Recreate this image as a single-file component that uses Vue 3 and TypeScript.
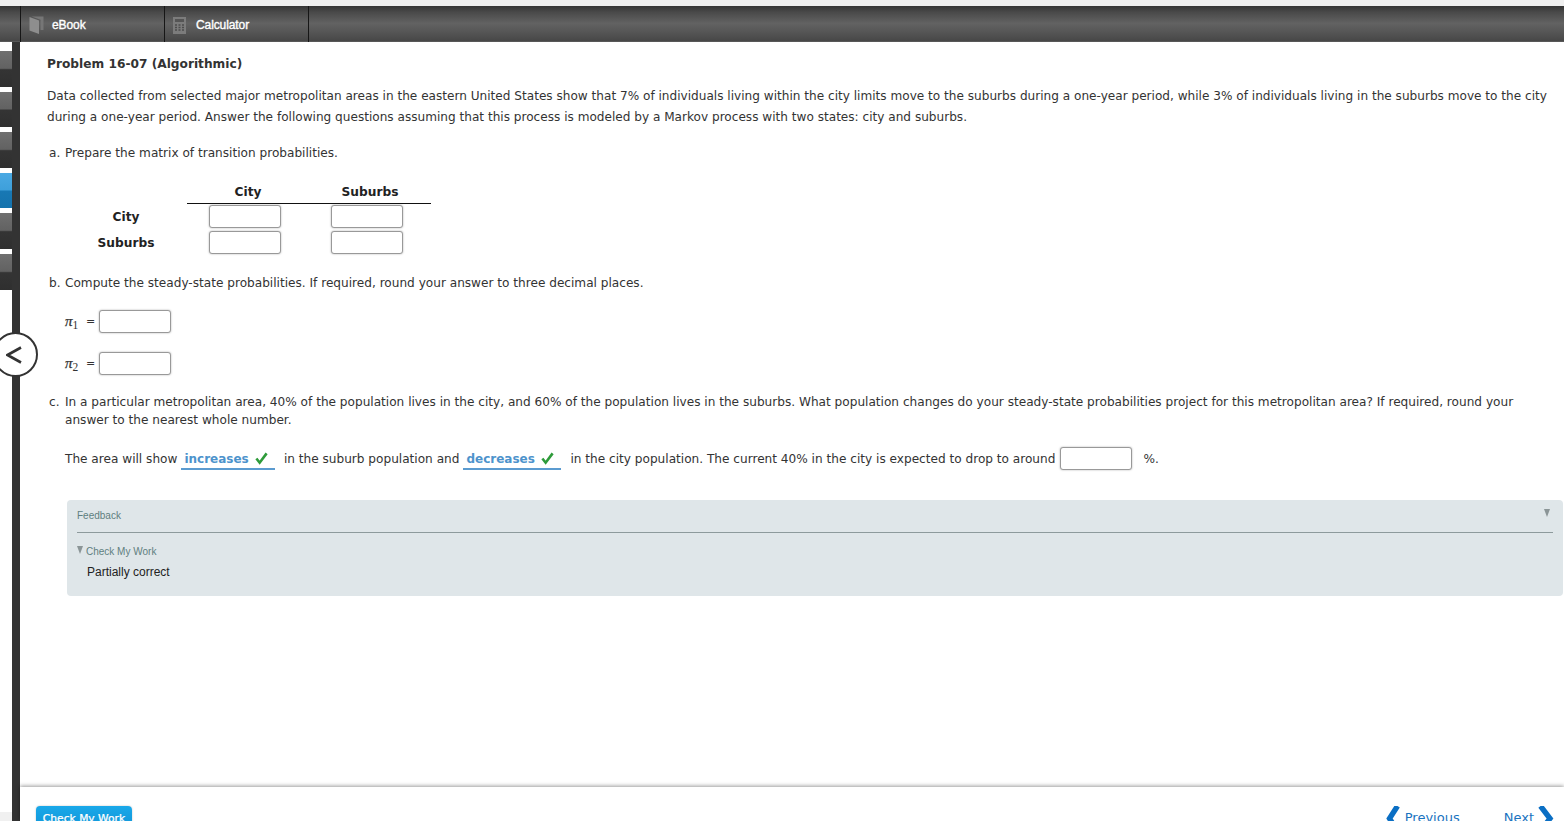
<script setup lang="ts">
const railTabs = [false, false, false, true, false, false]
const matrixRows = ['City', 'Suburbs']
const piRows = ['1', '2']
</script>

<template>
  <div class="app">
    <div class="top-strip"></div>
    <header class="toolbar">
      <div class="tool">
        <svg class="tool-icon" width="15" height="18" viewBox="0 0 15 18">
          <path d="M0.5 1 L10 4.5 V18 L0.5 14.5 Z" fill="#8e8e8e" />
          <path d="M2.5 0.5 H14.5 V14 H11.5 V3.8 Z" fill="#767676" />
        </svg>
        <span>eBook</span>
      </div>
      <div class="tool">
        <svg class="tool-icon" width="13" height="17" viewBox="0 0 13 17">
          <rect x="0" y="0" width="13" height="17" fill="#7c7c7c" />
          <rect x="2" y="2" width="9" height="3" fill="#555" />
          <path d="M2 8h2M5.5 8h2M9 8h2M2 10.5h2M5.5 10.5h2M9 10.5h2M2 13h2M5.5 13h2M9 13h2" stroke="#4c4c4c" stroke-width="1.5" />
        </svg>
        <span>Calculator</span>
      </div>
    </header>

    <div class="body">
      <aside class="rail">
        <div class="rail-tabs">
          <div v-for="(active, i) in railTabs" :key="i" class="rail-tab" :class="{ active }"></div>
          <div class="rail-foot"></div>
        </div>
        <div class="rail-line"></div>
      </aside>

      <main class="main">
        <section class="content">
          <h1 class="title">Problem 16-07 (Algorithmic)</h1>
          <p class="intro">Data collected from selected major metropolitan areas in the eastern United States show that 7% of individuals living within the city limits move to the suburbs during a one-year period, while 3% of individuals living in the suburbs move to the city during a one-year period. Answer the following questions assuming that this process is modeled by a Markov process with two states: city and suburbs.</p>

          <p class="step step-a"><span class="marker">a.</span>Prepare the matrix of transition probabilities.</p>
          <div class="matrix">
            <div class="matrix-head">
              <span></span>
              <b>City</b>
              <b>Suburbs</b>
            </div>
            <div v-for="row in matrixRows" :key="row" class="matrix-row">
              <b>{{ row }}</b>
              <div class="cell"><input class="box" type="text" /></div>
              <div class="cell"><input class="box" type="text" /></div>
            </div>
          </div>

          <p class="step step-b"><span class="marker">b.</span>Compute the steady-state probabilities. If required, round your answer to three decimal places.</p>
          <div class="pi-list">
            <div v-for="n in piRows" :key="n" class="pi-row">
              <span class="pi"><i>π</i><sub>{{ n }}</sub></span>
              <span class="eq">=</span>
              <input class="box" type="text" />
            </div>
          </div>

          <p class="step step-c"><span class="marker">c.</span>In a particular metropolitan area, 40% of the population lives in the city, and 60% of the population lives in the suburbs. What population changes do your steady-state probabilities project for this metropolitan area? If required, round your answer to the nearest whole number.</p>

          <div class="answer-line">
            <span>The area will show</span>
            <span class="pick pick-1">increases
              <svg width="13" height="13" viewBox="0 0 14 13"><path d="M1.5 6.5 L5 11 L12.5 1" fill="none" stroke="#2e9b3a" stroke-width="2.8" /></svg>
            </span>
            <span class="after-1">in the suburb population and</span>
            <span class="pick pick-2">decreases
              <svg width="13" height="13" viewBox="0 0 14 13"><path d="M1.5 6.5 L5 11 L12.5 1" fill="none" stroke="#2e9b3a" stroke-width="2.8" /></svg>
            </span>
            <span class="after-2">in the city population. The current 40% in the city is expected to drop to around</span>
            <input class="box box-inline" type="text" />
            <span class="percent">%.</span>
          </div>

          <div class="feedback">
            <div class="feedback-head">
              <span>Feedback</span>
              <i class="tri tri-right"></i>
            </div>
            <div class="feedback-work"><i class="tri"></i><span>Check My Work</span></div>
            <div class="feedback-text">Partially correct</div>
          </div>
        </section>

        <footer class="footer">
          <button class="check" type="button">Check My Work</button>
          <nav class="pager">
            <svg width="14" height="26" viewBox="0 0 14 26"><path d="M11.5 0 L3.5 12.5 L11.5 25" fill="none" stroke="#0b6fc4" stroke-width="5.4" /></svg>
            <span class="prev">Previous</span>
            <span class="next">Next</span>
            <svg width="16" height="26" viewBox="0 0 16 26"><path d="M2.5 0 L12 12.5 L2.5 25" fill="none" stroke="#0b6fc4" stroke-width="5.4" /></svg>
          </nav>
        </footer>
      </main>
    </div>

    <div class="collapse">
      <svg width="16" height="18" viewBox="0 0 16 18"><path d="M15 1.5 L1.5 9 L15 16.5" fill="none" stroke="#333" stroke-width="2.6" /></svg>
    </div>
  </div>
</template>

<style scoped>
.app {
  position: relative;
  display: flex;
  flex-direction: column;
  height: 821px;
  overflow: hidden;
  background: #fff;
  color: #333;
  font-family: "DejaVu Sans", Verdana, sans-serif;
  font-size: 12.12px;
}
.top-strip { height: 6px; background: #efefef; flex: none; }
.toolbar {
  display: flex;
  height: 36px;
  flex: none;
  padding-left: 20px;
  background: linear-gradient(#353535 0%, #4a4a4a 18%, #626262 48%, #575757 70%, #474747 97%, #666 100%);
  box-sizing: border-box;
}
.tool {
  display: flex;
  align-items: center;
  gap: 8px;
  width: 144px;
  box-sizing: border-box;
  padding-left: 8px;
  border-left: 1px solid #161616;
  color: #fff;
  font: 12px "Liberation Sans", Arial, sans-serif;
  letter-spacing: -0.1px;
  -webkit-text-stroke: 0.35px #fff;
}
.tool span { position: relative; top: 1px; }
.tool + .tool { gap: 10px; }
.tool:last-child { border-right: 1px solid #161616; width: 145px; }
.tool-icon { flex: none; position: relative; top: 1px; }
.body { display: flex; flex: 1; min-height: 0; }
.rail { display: flex; width: 20px; flex: none; }
.rail-tabs { display: flex; flex-direction: column; gap: 5px; width: 12px; padding-top: 9px; }
.rail-tab { height: 35.6px; background: linear-gradient(#6f6f6f 0%, #626262 48%, #343434 52%, #2f2f2f 100%); }
.rail-tab.active { background: linear-gradient(#4aa9e3 0%, #3ea0db 48%, #1878b4 52%, #1573ad 100%); }
.rail-foot { height: 9px; margin-top: auto; background: #f0f0f0; }
.rail-line { width: 8px; background: #333; }
.main { display: flex; flex-direction: column; flex: 1; min-width: 0; }
.content { flex: 1; padding: 14px 0 0 27px; }
.title { margin: 0; font-size: 12.2px; font-weight: 700; line-height: 16px; color: #333; }
.intro { margin: 14px 0 0; font-size: 12.105px; line-height: 21px; }
.step { position: relative; margin: 0; padding-left: 18px; line-height: 18px; }
.marker { position: absolute; left: 2px; }
.step-a { margin-top: 16px; }
.matrix { margin: 20px 0 0 18px; width: 366px; font-size: 12.2px; color: #222; }
.matrix-head, .matrix-row { display: grid; grid-template-columns: repeat(3, 122px); text-align: center; }
.matrix-head { padding: 2px 0 3px; line-height: 17px; position: relative; }
.matrix-head::after {
  content: "";
  position: absolute;
  left: 122px;
  right: 0;
  bottom: 0;
  height: 1px;
  background: #111;
}
.matrix-row { height: 26px; align-items: center; }
.matrix-row b { margin-top: 2px; }
.matrix-head + .matrix-row { margin-top: -1px; }
.cell { text-align: left; padding-left: 22px; display: flex; }
.box {
  display: block;
  width: 72px;
  height: 23px;
  box-sizing: border-box;
  padding: 0;
  background: #fff;
  border: 1px solid #999;
  border-radius: 3px;
  box-shadow: 0 0 2px #aaa;
  outline: none;
}
.step-b { margin-top: 19px; }
.pi-list { display: flex; flex-direction: column; gap: 19px; margin: 18px 0 0 18px; }
.pi-row { display: flex; align-items: center; height: 23px; }
.pi { width: 21px; font-family: "Liberation Serif", serif; color: #333; font-size: 15px; white-space: nowrap; }
.pi i { font-style: italic; -webkit-text-stroke: 0.25px #333; }
.pi sub { font-size: 11.5px; line-height: 0; vertical-align: -3px; }
.eq { width: 13px; font-size: 11px; color: #333; }
.step-c { margin-top: 18px; padding-right: 40px; }
.answer-line { display: flex; align-items: center; height: 23px; margin: 18px 0 0 18px; white-space: nowrap; }
.pick {
  display: flex;
  align-items: center;
  gap: 6px;
  box-sizing: border-box;
  height: 23px;
  padding: 2px 3px 0 3px;
  border-bottom: 2px solid #5b9bd0;
  color: #4d93cc;
  font-size: 12px;
  font-weight: 700;
}
.pick-1 { width: 94px; margin-left: 4px; }
.pick-2 { width: 98px; margin-left: 4px; }
.after-1 { margin-left: 8.5px; }
.after-2 { margin-left: 9px; }
.box-inline { margin-left: 5px; }
.percent { margin-left: 11px; }
.feedback {
  box-sizing: border-box;
  height: 96px;
  margin: 30px 1px 0 20px;
  padding: 10px 10px 0;
  background: #dfe6e9;
  border-radius: 4px;
  font-family: "Liberation Sans", Arial, sans-serif;
  color: #5f7f7f;
  font-size: 10px;
}
.feedback-head {
  display: flex;
  justify-content: space-between;
  height: 22px;
  border-bottom: 1px solid #8d9a9c;
  line-height: 11px;
}
.tri {
  display: block;
  width: 0;
  height: 0;
  border-left: 3.5px solid transparent;
  border-right: 3.5px solid transparent;
  border-top: 8px solid #8b9597;
}
.tri-right { margin: -1px 3px 0 0; }
.feedback-work { display: flex; align-items: flex-start; gap: 3px; margin-top: 13px; line-height: 11px; }
.feedback-work .tri { margin-top: 0; }
.feedback-text { margin: 8px 0 0 10px; color: #222; font-size: 12px; line-height: 14px; }
.footer {
  position: relative;
  display: flex;
  justify-content: space-between;
  flex: none;
  height: 34px;
  padding: 19px 12px 0 16px;
  box-sizing: border-box;
  background: #fff;
  box-shadow: 0 -1px 4px rgba(0, 0, 0, 0.4);
}
.check {
  display: block;
  width: 96px;
  height: 25px;
  padding: 0;
  border: 0;
  border-radius: 4px 4px 0 0;
  background: linear-gradient(#1aa8e9, #0e93d6);
  box-shadow: 0 0 2px rgba(0, 0, 0, 0.25);
  color: #fff;
  font: 400 10.7px "DejaVu Sans", Verdana, sans-serif;
  -webkit-text-stroke: 0.25px #fff;
  text-align: center;
  line-height: 16px;
  white-space: nowrap;
}
.pager {
  display: flex;
  align-items: flex-start;
  color: #1a73c0;
  font-size: 13px;
  line-height: 16px;
  margin-right: -2px;
}
.pager svg { flex: none; }
.prev { margin-left: 5px; margin-top: 4px; }
.next { margin-left: 44px; margin-top: 4px; }
.pager svg:last-child { margin-left: 4px; }
.collapse {
  position: absolute;
  left: -7px;
  top: 332px;
  display: flex;
  align-items: center;
  justify-content: flex-start;
  box-sizing: border-box;
  width: 45px;
  height: 45px;
  padding-left: 11px;
  background: #fff;
  border: 2.5px solid #333;
  border-radius: 50%;
}
</style>
